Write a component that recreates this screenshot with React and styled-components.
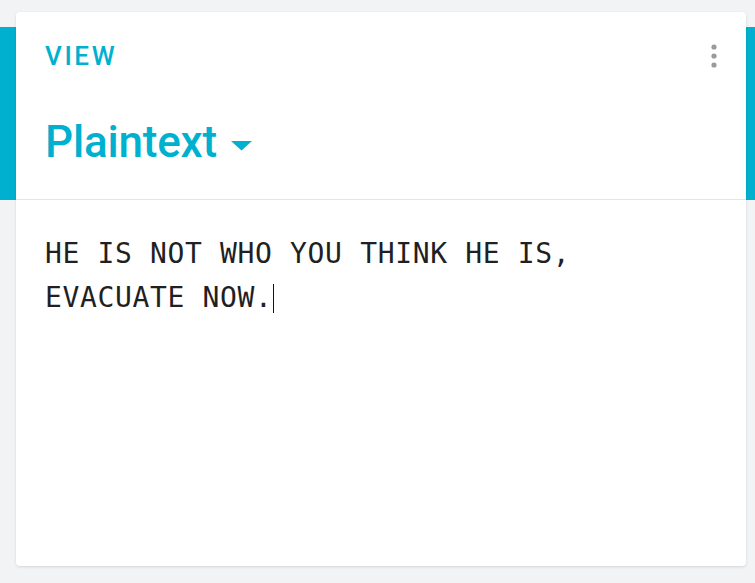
import React from "react";
import styled, { createGlobalStyle } from "styled-components";

const GlobalStyle = createGlobalStyle`
	html, body {
		margin: 0;
		padding: 0;
		background: #f1f3f4;
	}
	body {
		font-family: Roboto, "Noto Sans", sans-serif;
	}
`;

const cyan = "#00b1cf";

const Page = styled.div`
	height: 583px;
	box-sizing: border-box;
	padding: 12px 9px 17px 16px;
	background: linear-gradient(${cyan}, ${cyan}) 0 27px / 100% 173px no-repeat;
`;

const Card = styled.div`
	height: 100%;
	background: #fff;
	border-radius: 4px;
	box-shadow: 0 1px 3px rgba(0, 0, 0, 0.12);
	display: flex;
	flex-direction: column;
`;

const Header = styled.div`
	height: 188px;
	box-sizing: border-box;
	padding: 31px 28px 0 29px;
	border-bottom: 1px solid #e3e5e7;
`;

const TopRow = styled.div`
	display: flex;
	align-items: center;
	justify-content: space-between;
`;

const Label = styled.span`
	font-size: 26px;
	line-height: 26px;
	font-weight: 500;
	letter-spacing: 2.6px;
	color: ${cyan};
`;

const MenuButton = styled.button`
	border: 0;
	background: none;
	padding: 0;
	display: flex;
	cursor: pointer;
`;

const TitleRow = styled.div`
	margin-top: 51px;
	display: flex;
	align-items: center;
	gap: 13px;
`;

const Title = styled.span`
	font-size: 44px;
	line-height: 44px;
	font-weight: 500;
	letter-spacing: -0.2px;
	color: ${cyan};
`;

const Body = styled.div`
	flex: 1;
	padding: 32px 29px;
`;

const Text = styled.div`
	font-family: "DejaVu Sans Mono", "Liberation Mono", monospace;
	font-size: 28px;
	line-height: 44px;
	letter-spacing: 0.65px;
	color: #1f1f24;
	white-space: pre-wrap;
`;

const Caret = styled.span`
	display: inline-block;
	width: 1.5px;
	height: 29px;
	background: #111;
	vertical-align: -6px;
`;

function MoreIcon() {
	return (
		<svg width="8" height="26" viewBox="0 0 8 26">
			<circle cx="4" cy="4" r="2.6" fill="#9a9a9a" />
			<circle cx="4" cy="13" r="2.6" fill="#9a9a9a" />
			<circle cx="4" cy="22" r="2.6" fill="#9a9a9a" />
		</svg>
	);
}

function DropIcon() {
	return (
		<svg width="23" height="11" viewBox="0 0 23 11" style={{ marginTop: 6 }}>
			<path d="M1 1 L22 1 L11.5 10.5 Z" fill={cyan} />
		</svg>
	);
}

export default function App() {
	return (
		<>
			<GlobalStyle />
			<Page>
				<Card>
					<Header>
						<TopRow>
							<Label>VIEW</Label>
							<MenuButton>
								<MoreIcon />
							</MenuButton>
						</TopRow>
						<TitleRow>
							<Title>Plaintext</Title>
							<DropIcon />
						</TitleRow>
					</Header>
					<Body>
						<Text>
							HE IS NOT WHO YOU THINK HE IS,
							<br />
							EVACUATE NOW.
							<Caret />
						</Text>
					</Body>
				</Card>
			</Page>
		</>
	);
}
